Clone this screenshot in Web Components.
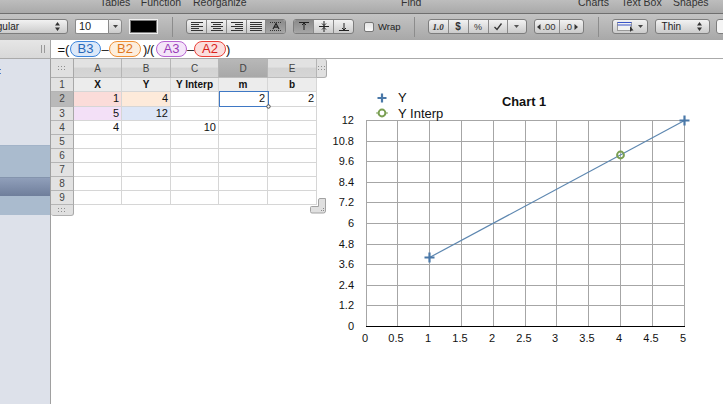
<!DOCTYPE html>
<html><head><meta charset="utf-8"><style>
html,body{margin:0;padding:0;background:#fff}
body{width:723px;height:404px;overflow:hidden;font-family:"Liberation Sans",Arial,sans-serif;display:flex;flex-direction:column}
</style></head><body>
<app-top-strip></app-top-strip>
<app-format-bar></app-format-bar>
<app-formula-bar></app-formula-bar>
<app-workspace>
  <app-sidebar slot="side"></app-sidebar>
  <app-sheet slot="main"></app-sheet>
  <app-chart slot="main"></app-chart>
</app-workspace>
<script>
function def(name, css, html){
  customElements.define(name, class extends HTMLElement{
    constructor(){super();const r=this.attachShadow({mode:'open'});r.innerHTML='<style>'+css+'</style>'+(typeof html==='function'?html():html);}
  });
}
def('app-top-strip',`
:host{display:flex;box-sizing:border-box;height:14px;overflow:hidden;background:linear-gradient(#bdbdbd,#a9a9a9);border-bottom:1px solid #6f6f6f;font-size:10.5px;color:#333}
span{display:block;line-height:14px;margin-top:-5px;white-space:nowrap;text-align:center;flex:none}
`,`<span style="margin-left:100px;width:29px">Tables</span><span style="margin-left:11px;width:42px">Function</span><span style="margin-left:11px;width:53px">Reorganize</span><span style="margin-left:155px;width:20px">Find</span><span style="margin-left:157px;width:31px">Charts</span><span style="margin-left:12px;width:41px">Text Box</span><span style="margin-left:11px;width:33px">Shapes</span>`);

def('tb-group',`
:host{display:inline-flex;box-sizing:border-box;height:15px;border:1px solid #7d7d7d;border-radius:3px;background:linear-gradient(#f2f2f2,#cbcbcb);overflow:hidden;flex:none}
::slotted(*){display:flex;align-items:center;justify-content:center;box-sizing:border-box;height:13px;border-right:1px solid #8a8a8a;font-size:10px;color:#333;flex:none}
::slotted(:last-child){border-right:0}
::slotted(.on){background:linear-gradient(#8a8a8a,#a6a6a6)}
`,`<slot></slot>`);

const lines=(kind)=>{
  const m={l:[[2,14],[2,10],[2,14],[2,10],[2,14]],c:[[2,14],[4,12],[2,14],[4,12],[2,14]],r:[[2,14],[6,14],[2,14],[6,14],[2,14]],j:[[2,14],[2,14],[2,14],[2,14],[2,14]]}[kind];
  return `<svg width="16" height="11" viewBox="0 0 16 11">`+m.map((p,i)=>`<path d="M${p[0]} ${1.5+i*2}H${p[1]}" stroke="#333"/>`).join('')+`</svg>`;
};

def('app-format-bar',`
:host{display:flex;align-items:center;box-sizing:border-box;height:26px;overflow:hidden;background:linear-gradient(#c3c3c3,#a8a8a8);font-size:10px;color:#222;white-space:nowrap;padding-bottom:1px}
.sel{box-sizing:border-box;height:15px;border:1px solid #7d7d7d;border-radius:3px;background:linear-gradient(#f2f2f2,#cbcbcb);display:flex;align-items:center;justify-content:space-between;flex:none;font-size:10px}
.fontsel{width:100px;margin-left:-32px;padding:0 6px 0 15px}
.sz{display:flex;margin-left:7px;flex:none;height:15px;box-sizing:border-box}
.sz b{font-weight:400;box-sizing:border-box;width:33px;background:#fff;border:1px solid #8a8a8a;border-right:0;border-radius:2px 0 0 2px;line-height:13px;padding-left:3px;font-size:11px}
.sz i{box-sizing:border-box;width:14px;border:1px solid #8a8a8a;background:linear-gradient(#f2f2f2,#cbcbcb);border-radius:0 3px 3px 0;display:flex;align-items:center;justify-content:center}
.well{width:29px;height:15px;box-sizing:border-box;margin-left:7px;background:#000;border:1px solid #eee;outline:1px solid #7d7d7d;outline-offset:-2px;flex:none}
.div{width:1px;height:20px;background:#8c8c8c;flex:none;margin:0 13px 0 14px}
.chk{box-sizing:border-box;width:10px;height:10px;border:1px solid #777;border-radius:2px;background:linear-gradient(#e4e4e4,#fafafa);margin:0 4px 0 10px;flex:none}
tb-group{margin-right:7px}
.it{font:italic bold 9px "Liberation Serif",serif}
`,`
<div class="sel fontsel"><span>Regular</span><svg width="7" height="11" viewBox="0 0 7 11"><path d="M3.5 1L6 4.5H1zM3.5 10L1 6.5H6z" fill="#333"/></svg></div>
<div class="sz"><b>10</b><i><svg width="7" height="5"><path d="M1 1H6L3.5 4z" fill="#444"/></svg></i></div>
<div class="well"></div>
<div class="div"></div>
<tb-group>
 <span style="width:20px">${lines('l')}</span><span style="width:20px">${lines('c')}</span><span style="width:20px">${lines('r')}</span><span style="width:19px">${lines('j')}</span><span class="on" style="width:19px"><svg width="16" height="11" viewBox="0 0 16 11"><path d="M2 1.5H14M2 9.5H14" stroke="#333" stroke-dasharray="1 1"/><path d="M5 8L8 2.5L11 8M6.2 6.2H9.8" fill="none" stroke="#222" stroke-width="1.2"/></svg></span>
</tb-group>
<tb-group style="margin-right:0">
 <span class="on" style="width:20px"><svg width="16" height="11" viewBox="0 0 16 11"><path d="M3 1.5H13" stroke="#222"/><path d="M8 2V9M6 4L8 2L10 4" fill="none" stroke="#222"/></svg></span><span style="width:20px"><svg width="16" height="11" viewBox="0 0 16 11"><path d="M3 5.5H13" stroke="#222"/><path d="M8 0V11M6 2.5L8 4.5L10 2.5M6 8.5L8 6.5L10 8.5" fill="none" stroke="#222"/></svg></span><span style="width:19px"><svg width="16" height="11" viewBox="0 0 16 11"><path d="M3 9.5H13" stroke="#222"/><path d="M8 2V9M6 7L8 9L10 7" fill="none" stroke="#222"/></svg></span>
</tb-group>
<div class="chk"></div><span style="font-size:9.5px;width:23px">Wrap</span>
<div class="div" style="margin:0 13px 0 13px"></div>
<tb-group>
 <span class="it" style="width:20px">1.0</span><span style="width:20px;font-weight:700">$</span><span style="width:20px;font-size:9px">%</span><span style="width:19px"><svg width="10" height="9" viewBox="0 0 10 9"><path d="M1.5 5L4 7.5L8.5 1.5" fill="none" stroke="#333" stroke-width="1.3"/></svg></span><span style="width:18px"><svg width="7" height="5"><path d="M1 1H6L3.5 4z" fill="#555"/></svg></span>
</tb-group>
<tb-group style="margin-right:0">
 <span style="width:25px;font-size:9.5px"><svg width="4" height="6" style="margin-right:1px"><path d="M3.5 0V6L0 3z" fill="#333"/></svg>.00</span><span style="width:23px;font-size:9.5px">.0<svg width="4" height="6" style="margin-left:2px"><path d="M.5 0V6L4 3z" fill="#333"/></svg></span>
</tb-group>
<div class="div" style="margin:0 13px 0 14px"></div>
<div class="sel" style="width:36px;padding:0 3px 0 4px"><svg width="18" height="11" viewBox="0 0 18 11"><rect x=".5" y="1.5" width="14" height="8" fill="#f2f2f2" stroke="#999"/><path d="M.5 1.5H14.5M.5 4H14.5" stroke="#3a55c8"/><path d="M13 5L13 11L14.5 9.5L16.5 9.5z" fill="#333"/></svg><svg width="7" height="5"><path d="M1 1H6L3.5 4z" fill="#444"/></svg></div>
<div class="sel" style="width:55px;margin-left:7px;padding:0 6px 0 6px"><span>Thin</span><svg width="7" height="11" viewBox="0 0 7 11"><path d="M3.5 1L6 4.5H1zM3.5 10L1 6.5H6z" fill="#333"/></svg></div>
<div class="sel" style="width:20px;margin-left:6px;background:#f4f4f4"></div>
`);

def('f-ref',`
:host{display:inline-block;box-sizing:border-box;width:31px;height:16px;border:1px solid var(--c);background:var(--b);color:var(--t);border-radius:8px;text-align:center;line-height:14px;font-size:13px;flex:none}
`,`<slot></slot>`);

def('app-formula-bar',`
:host{display:flex;box-sizing:border-box;height:19px;border-bottom:1px solid #aaa;background:#fff}
.l{width:51px;box-sizing:border-box;background:linear-gradient(#e6e6e6,#d8d8d8);border-right:1px solid #a6a6a6;display:flex;align-items:center;justify-content:flex-end;padding-right:5px;flex:none}
.l i{display:block;width:1px;height:8px;background:#999;margin-left:2px}
.f{display:flex;align-items:center;font-size:13px;padding-left:6px;color:#111;height:18px}
.o{display:inline-block;text-align:center;flex:none}
`,`
<div class="l"><i></i><i></i></div>
<div class="f"><span class="o" style="width:13px">=(</span>
<f-ref style="--c:#3f86dc;--b:#dde9f9;--t:#2868b8">B3</f-ref><span class="o" style="width:8px;color:#222">–</span>
<f-ref style="--c:#f09238;--b:#fdeedd;--t:#e0761c;width:32px">B2</f-ref><span class="o" style="width:15px;letter-spacing:-.5px">)/(</span>
<f-ref style="--c:#b764d2;--b:#f4e5f9;--t:#9a3cb8">A3</f-ref><span class="o" style="width:7px;color:#222">–</span>
<f-ref style="--c:#ea4038;--b:#fbdedd;--t:#d8221c;width:32px">A2</f-ref><span>)</span></div>
`);

def('app-workspace',`
:host{display:flex;flex:1;min-height:0}
.m{display:flex;flex:1;align-items:flex-start;min-width:0}
`,`<slot name="side"></slot><div class="m"><slot name="main"></slot></div>`);

def('app-sidebar',`
:host{display:flex;flex-direction:column;box-sizing:border-box;width:51px;flex:none;background:#dde1ea;border-right:1px solid #a0a0a0}
.a{height:86px}
.a i{display:block;width:1px;height:5px;margin-top:10px;border-top:1px solid #4d80c8;border-bottom:1px solid #4d80c8;box-sizing:border-box}
.b{height:32px;box-sizing:border-box;background:#aabbce;border-top:1px solid #a2b3c8}
.c{height:19px;background:linear-gradient(#909fba,#6f7e9b);box-sizing:border-box;border-top:1px solid #8494ad}
.d{height:19px;background:#aabbce}
`,`<div class="a"><i></i></div><div class="b"></div><div class="c"></div><div class="d"></div>`);

const sheetData=[
 ['X','Y','Y Interp','m','b'],
 ['1','4','','2','2'],
 ['5','12','','',''],
 ['4','','10','',''],
 ['','','','',''],['','','','',''],['','','','',''],['','','','',''],['','','','','']
];
const sheetFill={'1,0':'#fbdcd9','1,1':'#fdeada','2,0':'#f3e0f7','2,1':'#dde6f6'};
def('app-sheet',`
:host{display:block;position:relative;width:276px;flex:none;height:157px;font-size:11px;color:#111}
.g{display:grid;grid-template-columns:23px 48px 49px 48px 49px 49px 10px;grid-template-rows:19px 14px 15px 14px 14px 14px 14px 14px 14px 14px 11px;width:277px}
.ch{box-sizing:border-box;background:linear-gradient(#e2e2e2 0,#e2e2e2 45%,#d2d2d2 50%,#d6d6d6 100%);border-right:1px solid #b5b5b5;border-bottom:1px solid #bdbdbd;text-align:center;line-height:19px;font-size:10px;color:#444}
.ch.sel{background:linear-gradient(#b8b8b8,#a8a8a8)}
.rh{box-sizing:border-box;background:#e2e2e2;border-bottom:1px solid #b5b5b5;border-right:1px solid #a8a8a8;text-align:center;line-height:14px;font-size:10px;color:#444}
.rh.sel{background:#b9b9b9}
.c{box-sizing:border-box;border-right:1px solid #d6d6d6;border-bottom:1px solid #d6d6d6;text-align:right;padding-right:2px;line-height:13px;font-size:11px;white-space:nowrap;overflow:hidden}
.c.h{background:#ececec;font-weight:700;text-align:center;padding:0;font-size:10px;line-height:14px}
.grip{display:flex;align-items:center;justify-content:center}
.ga{background:#e0e0e0;border-right:1px solid #a8a8a8;border-bottom:1px solid #b0b0b0;box-sizing:border-box}
.sl{position:absolute;left:168px;top:32px;width:50px;height:16px;box-sizing:border-box;border:1px solid #3f78c4}
.kn{position:absolute;left:215px;top:45px}
.res{position:absolute;left:259px;top:139px}
svg.dots{display:block}
`,()=>{
 const dots=(w,h)=>`<svg class="dots" width="${w}" height="${h}" viewBox="0 0 ${w} ${h}"><g fill="#8f8f8f">`+[0,1].map(j=>[0,1,2].map(i=>`<rect x="${(w-7)/2+i*3|0}" y="${(h-4)/2+j*3|0}" width="1" height="1"/>`).join('')).join('')+`</g></svg>`;
 let h=`<div class="g"><div class="ga grip">${dots(22,18)}</div>`;
 ['A','B','C','D','E'].forEach(c=>h+=`<div class="ch${c==='D'?' sel':''}">${c}</div>`);
 h+=`<div class="ga grip" style="border-radius:0 3px 3px 0">${dots(9,18)}</div>`;
 sheetData.forEach((r,i)=>{
  h+=`<div class="rh${i===1?' sel':''}">${i+1}</div>`;
  r.forEach((v,j)=>{const f=sheetFill[i+','+j];h+=`<div class="c${i===0?' h':''}"${f?` style="background:${f}"`:''}>${v}</div>`;});
  h+=`<div></div>`;
 });
 h+=`<div class="ga grip" style="border-radius:0 0 3px 3px">${dots(22,10)}</div></div>`;
 h+=`<div class="sl"></div><svg class="kn" width="5" height="5"><circle cx="2.5" cy="2.5" r="1.7" fill="#fff" stroke="#444"/></svg>`;
 h+=`<svg class="res" width="17" height="16" viewBox="0 0 17 16"><path d="M15.5.5V13a2 2 0 0 1-2 2H2a1.5 1.5 0 0 1-1.5-1.5V9.5a1 1 0 0 1 1-1H8.5V2a1.5 1.5 0 0 1 1.5-1.5z" fill="#e0e0e0" stroke="#a2a2a2"/><path d="M11 12.5h1M13 12.5h1M13 10.5h1" stroke="#888"/></svg>`;
 return h;
});

def('app-chart',`
:host{display:block;flex:none;width:396px;height:345px}
svg{display:block;font-family:"Liberation Sans",Arial,sans-serif}
text{fill:#111}
`,()=>{
 const ox=327, oy=59;
 let s=`<svg width="396" height="345" viewBox="0 0 396 345">`;
 let g='';
 const xs=[366.5,397.5,429.5,461.5,493.5,525.5,556.5,588.5,620.5,652.5,684.5];
 const ys=[120.5,141.5,161.5,182.5,202.5,223.5,244.5,264.5,285.5,305.5];
 xs.forEach(x=>g+=`M${x-ox} ${120-oy}V${327-oy}`);
 ys.forEach(y=>g+=`M${366-ox} ${y-oy}H${685-ox}`);
 s+=`<path d="${g}" stroke="#a6a6a6" fill="none"/>`;
 s+=`<path d="M${366-ox} ${326.5-oy}H${685-ox}" stroke="#000" fill="none"/>`;
 const yl=['12','10.8','9.6','8.4','7.2','6','4.8','3.6','2.4','1.2','0'];
 const yy=[120,141,161,182,202,223,244,264,285,305,326];
 yl.forEach((t,i)=>s+=`<text x="${354-ox}" y="${yy[i]+4-oy}" text-anchor="end" font-size="11">${t}</text>`);
 ['0','0.5','1','1.5','2','2.5','3','3.5','4','4.5','5'].forEach((t,i)=>s+=`<text x="${xs[i]-1.5-ox}" y="${342-oy}" text-anchor="middle" font-size="11">${t}</text>`);
 s+=`<text x="${502-ox}" y="${106-oy}" font-size="12.8" font-weight="700">Chart 1</text>`;
 s+=`<text x="${398-ox}" y="${102-oy}" font-size="13">Y</text><text x="${398-ox}" y="${118-oy}" font-size="13">Y Interp</text>`;
 const plus=(cx,cy,r)=>`<path d="M${cx-ox-r} ${cy-oy}H${cx-ox+r}M${cx-ox} ${cy-oy-r}V${cy-oy+r}" stroke="#4a78a8" stroke-width="2.2" fill="none"/>`;
 s+=plus(382,98,4.5);
 s+=`<path d="M${376-ox} ${113-oy}H${388-ox}" stroke="#7fa35a" stroke-width="1"/><circle cx="${382-ox}" cy="${113-oy}" r="3.4" fill="#fff" stroke="#7a9f52" stroke-width="2"/>`;
 s+=`<path d="M${429.5-ox} ${257.5-oy}L${684.5-ox} ${120.5-oy}" stroke="#5d87b0" stroke-width="1.2" fill="none"/>`;
 s+=plus(429.5,257.5,5)+plus(684.5,120.5,5);
 s+=`<circle cx="${620.5-ox}" cy="${155-oy}" r="3.4" fill="none" stroke="#7a9f52" stroke-width="2"/>`;
 return s+`</svg>`;
});
</script>
</body></html>
